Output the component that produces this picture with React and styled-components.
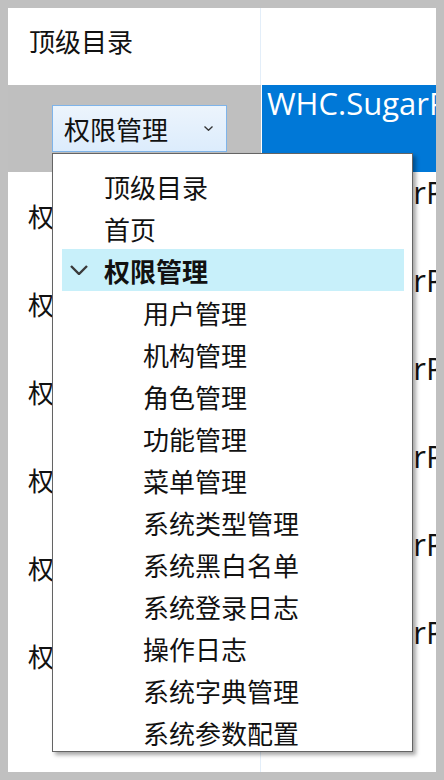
import React from 'react';
import styled, { createGlobalStyle } from 'styled-components';

const CJK = '"Noto Sans CJK SC", "Noto Sans", sans-serif';
const LATIN = '"Open Sans", "Noto Sans CJK SC", sans-serif';

const GlobalStyle = createGlobalStyle`
  html, body {
    margin: 0;
    padding: 0;
    background: #c0c0c0;
  }

  body {
    font-family: ${CJK};
  }
`;

const Frame = styled.div`
  box-sizing: border-box;
  width: 444px;
  height: 780px;
  padding: 8px;
  background: #c0c0c0;
`;

const Sheet = styled.div`
  position: relative;
  width: 428px;
  height: 764px;
  background: #fff;
  overflow: hidden;
  display: grid;
  grid-template-columns: 253px 175px;
  grid-template-rows: 77px 87px repeat(6, 88px) 1fr;
`;

const NameCell = styled.div`
  box-sizing: border-box;
  min-width: 0;
  display: flex;
  align-items: ${({ $top }) => ($top ? 'flex-start' : 'center')};
  padding: ${({ $top }) => ($top ? '16px 0 0 21px' : '0 0 0 20px')};
  border-right: 1px solid #e3eef9;
  overflow: hidden;
  white-space: nowrap;
  font-family: ${CJK};
  font-size: 26px;
  line-height: 34px;
  color: #111;
`;

const PathCell = styled.div`
  box-sizing: border-box;
  min-width: 0;
  padding: 2px 0 0 3px;
  overflow: hidden;
  white-space: nowrap;
  font-family: ${LATIN};
  font-size: 31px;
  line-height: 37px;
  color: #111;
`;

const EditCell = styled.div`
  display: flex;
  align-items: center;
  padding-left: 44px;
  background: #bfbfbf;
`;

const SelectedCell = styled.div`
  box-sizing: border-box;
  min-width: 0;
  margin-left: 1px;
  padding: 0 0 0 5px;
  overflow: hidden;
  white-space: nowrap;
  background: #0078d7;
  font-family: ${LATIN};
  font-size: 31px;
  line-height: 37px;
  color: #fff;
`;

const ComboBox = styled.div`
  box-sizing: border-box;
  width: 175px;
  height: 47px;
  display: flex;
  align-items: center;
  justify-content: space-between;
  padding: 0 13px 0 11px;
  border: 1px solid #7eb4ea;
  background: linear-gradient(#ecf4fc, #dcecfc);
  font-family: ${CJK};
  font-size: 26px;
  color: #111;
`;

const Popup = styled.div`
  position: absolute;
  left: 44px;
  top: 145px;
  box-sizing: border-box;
  width: 361px;
  height: 599px;
  padding: 11px 8px 0 9px;
  border: 1px solid #646464;
  background: #fff;
  box-shadow: 3px 3px 4px rgba(0, 0, 0, 0.35);
  overflow: hidden;
`;

const TreeItem = styled.div`
  box-sizing: border-box;
  height: 42px;
  display: flex;
  align-items: center;
  padding-left: ${({ $level }) => ($level ? '81px' : '42px')};
  background: ${({ $selected }) => ($selected ? '#c8f0fa' : 'transparent')};
  font-family: ${CJK};
  font-size: 26px;
  font-weight: ${({ $selected }) => ($selected ? 700 : 400)};
  white-space: nowrap;
  color: #111;
`;

const Expander = styled.svg`
  width: 18px;
  height: 10px;
  margin: 0 16px 0 -34px;
  flex: none;
`;

const SmallChevron = styled.svg`
  width: 9px;
  height: 5px;
  flex: none;
`;

const menu = [
  { name: '顶级目录', level: 0 },
  { name: '首页', level: 0 },
  { name: '权限管理', level: 0, selected: true, expanded: true },
  { name: '用户管理', level: 1 },
  { name: '机构管理', level: 1 },
  { name: '角色管理', level: 1 },
  { name: '功能管理', level: 1 },
  { name: '菜单管理', level: 1 },
  { name: '系统类型管理', level: 1 },
  { name: '系统黑白名单', level: 1 },
  { name: '系统登录日志', level: 1 },
  { name: '操作日志', level: 1 },
  { name: '系统字典管理', level: 1 },
  { name: '系统参数配置', level: 1 }
];

const ASSEMBLY = 'WHC.SugarP';
const rows = [1, 2, 3, 4, 5, 6];

const App = () => (
  <>
    <GlobalStyle />
    <Frame>
      <Sheet>
        <NameCell $top>顶级目录</NameCell>
        <PathCell />

        <EditCell>
          <ComboBox>
            <span>权限管理</span>
            <SmallChevron viewBox="0 0 9 5">
              <path d="M0.5 0.5 L4.5 4.3 L8.5 0.5" fill="none" stroke="#333" strokeWidth="1.3" />
            </SmallChevron>
          </ComboBox>
        </EditCell>
        <SelectedCell>{ASSEMBLY}</SelectedCell>

        {rows.map((r) => (
          <React.Fragment key={r}>
            <NameCell>权限管理</NameCell>
            <PathCell>{ASSEMBLY}</PathCell>
          </React.Fragment>
        ))}

        <NameCell />
        <PathCell />

        <Popup>
          {menu.map((item) => (
            <TreeItem key={item.name} $level={item.level} $selected={item.selected}>
              {item.expanded && (
                <Expander viewBox="0 0 18 10">
                  <path d="M1 1 L9 9 L17 1" fill="none" stroke="#3a3a3a" strokeWidth="2.4" />
                </Expander>
              )}
              {item.name}
            </TreeItem>
          ))}
        </Popup>
      </Sheet>
    </Frame>
  </>
);

export default App;
